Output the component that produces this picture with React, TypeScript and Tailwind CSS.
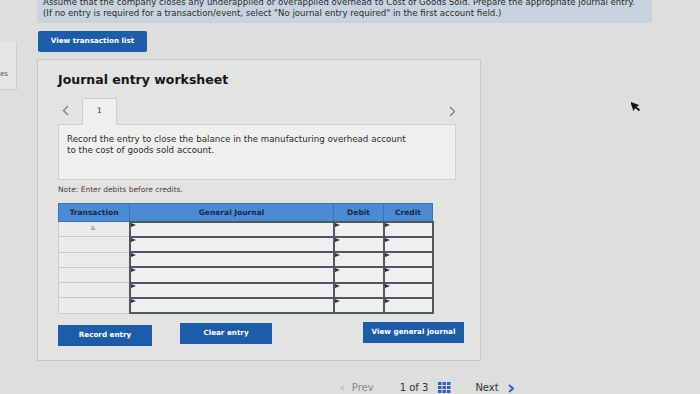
import React from 'react';

const rows = ['a.', '', '', '', '', ''];

function Marker() {
  return (
    <svg className="absolute left-0 top-0" width="5" height="5" viewBox="0 0 5 5">
      <polygon points="0,0 5,2 0,4" fill="#2e3640" />
    </svg>
  );
}

function Chevron({ dir }: { dir: 'left' | 'right' }) {
  return (
    <svg width="7" height="11" viewBox="0 0 7 11">
      <polyline
        points={dir === 'left' ? '6,1 1.5,5.5 6,10' : '1,1 5.5,5.5 1,10'}
        fill="none"
        stroke="#7a7a7a"
        strokeWidth="1.2"
      />
    </svg>
  );
}

export default function App() {
  return (
    <div className="relative flex w-[700px] h-[394px] overflow-hidden bg-[#dededc] text-[#2a2a2a] font-['DejaVu_Sans',sans-serif]">
      {/* left nav stub */}
      <div className="w-[37px] shrink-0">
        <div className="mt-[42px] w-[17px] h-[48px] bg-[#e6e6e4] border-r border-b border-[#cdcdcb] flex items-end pb-[10px]">
          <span className="text-[7px] text-[#555]">es</span>
        </div>
      </div>

      <div className="flex flex-col w-[615px] shrink-0">
        {/* instructions banner */}
        <div className="shrink-0 h-[23px] bg-[#c7d3de] px-[6px] overflow-hidden text-[8.6px] leading-[11px] text-[#2b2b2b]">
          <div className="-mt-[3px] whitespace-nowrap">
            Assume that the company closes any underapplied or overapplied overhead to Cost of Goods Sold. Prepare the appropriate journal entry.
          </div>
          <div className="whitespace-nowrap">
            (If no entry is required for a transaction/event, select "No journal entry required" in the first account field.)
          </div>
        </div>

        <button className="shrink-0 mt-[8px] ml-[1px] w-[109px] h-[21px] rounded-[2px] bg-[#1c5ca9] text-white text-[7.2px] font-bold">
          View transaction list
        </button>

        {/* worksheet panel */}
        <div className="shrink-0 mt-[7px] w-[444px] h-[302px] border border-[#c8c8c6] bg-[#e3e3e1] pl-[20px] flex flex-col">
          <h2 className="mt-[12px] text-[12.5px] leading-[15px] font-bold text-[#161616]">Journal entry worksheet</h2>

          <div className="mt-[11px] w-[398px] flex items-end h-[26px]">
            <div className="w-[24px] pl-[4px] pb-[8px]"><Chevron dir="left" /></div>
            <div className="relative z-10 -mb-px w-[35px] h-[27px] bg-[#efefed] border border-b-0 border-[#cfcfcd] flex justify-center pt-[6px] text-[7.5px] text-[#333]">
              1
            </div>
            <div className="flex-1" />
            <div className="pb-[7px]"><Chevron dir="right" /></div>
          </div>

          <div className="w-[398px] h-[56px] border border-[#cfcfcd] bg-[#efefed] px-[8px] pt-[9px] text-[8.7px] leading-[11px] text-[#2a2a2a]">
            <div className="whitespace-nowrap">Record the entry to close the balance in the manufacturing overhead account</div>
            <div>to the cost of goods sold account.</div>
          </div>

          <div className="mt-[6px] text-[7.5px] leading-[8px] text-[#4a3f3f]">Note: Enter debits before credits.</div>

          <table className="mt-[9px] w-[374px] table-fixed border-collapse">
            <colgroup>
              <col className="w-[71px]" />
              <col className="w-[204px]" />
              <col className="w-[50px]" />
              <col className="w-[49px]" />
            </colgroup>
            <thead>
              <tr className="h-[18px] bg-[#4b8bd4] text-[7.5px] font-bold text-[#14284a]">
                <th className="border border-[#3a72b6] font-bold">Transaction</th>
                <th className="border border-[#3a72b6] font-bold">General Journal</th>
                <th className="border border-[#3a72b6] font-bold">Debit</th>
                <th className="border border-[#3a72b6] font-bold">Credit</th>
              </tr>
            </thead>
            <tbody>
              {rows.map((t, i) => (
                <tr key={i} className="h-[15.3px]">
                  <td className="border border-[#cbcbc9] bg-[#ebebe9] text-center align-top pt-[2px] text-[6.5px] leading-[8px] text-[#777]">{t}</td>
                  <td className="relative border-2 border-[#4f5760] bg-[#efefed]"><Marker /></td>
                  <td className="relative border-2 border-[#4f5760] bg-[#efefed]"><Marker /></td>
                  <td className="relative border-2 border-[#4f5760] bg-[#efefed]"><Marker /></td>
                </tr>
              ))}
            </tbody>
          </table>

          <div className="mt-[8px] flex items-start">
            <button className="mt-[3px] w-[94px] h-[21px] bg-[#1c5ca9] text-white text-[7.2px] font-bold">Record entry</button>
            <button className="mt-[1px] ml-[28px] w-[92px] h-[21px] bg-[#1c5ca9] text-white text-[7.2px] font-bold">Clear entry</button>
            <button className="ml-[91px] w-[101px] h-[21px] bg-[#1c5ca9] text-white text-[7.2px] font-bold">View general journal</button>
          </div>
        </div>

        {/* pagination */}
        <div className="shrink-0 mt-[20px] ml-[303px] flex items-center h-[14px] text-[10px] leading-[14px]">
          <span className="text-[#b0b0b0] text-[12px]">&#8249;</span>
          <span className="ml-[7px] text-[#8a8a8a]">Prev</span>
          <span className="ml-[26px] text-[#333]">1 of 3</span>
          <svg className="ml-[10px]" width="13" height="12" viewBox="0 0 13 12">
            {[0, 1, 2].map((r) =>
              [0, 1, 2].map((c) => (
                <rect key={`${r}${c}`} x={c * 4.5} y={r * 4} width="3.5" height="3" fill="#2d63c4" />
              ))
            )}
          </svg>
          <span className="ml-[24px] text-[#333]">Next</span>
          <svg className="ml-[9px]" width="6" height="9" viewBox="0 0 6 9">
            <polyline points="1,1 5,4.5 1,8" fill="none" stroke="#2d63c4" strokeWidth="2" />
          </svg>
        </div>
      </div>

      {/* mouse cursor */}
      <svg className="absolute left-[631px] top-[99px]" width="10" height="14" viewBox="0 0 10 14">
        <polygon points="1,1 1,11 3.5,8.5 6,13 7.5,12 5.2,7.6 8.5,7.6" fill="#111" transform="rotate(-20 5 7)" />
      </svg>
    </div>
  );
}
